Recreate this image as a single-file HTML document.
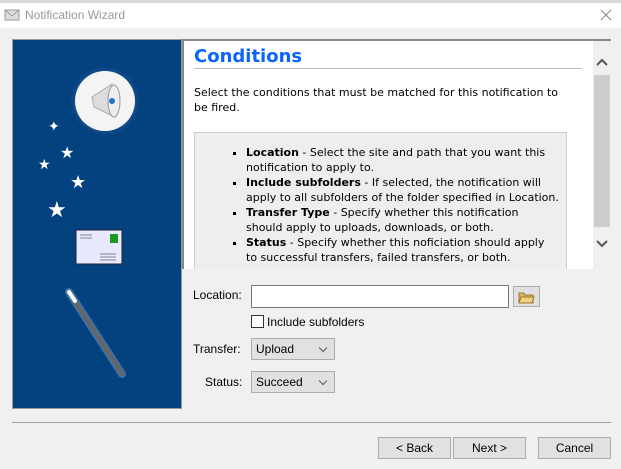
<!DOCTYPE html>
<html><head><style>
*{box-sizing:border-box;margin:0;padding:0}
body{width:621px;height:469px;background:#f0f0f0;position:relative;overflow:hidden;font-family:"Liberation Sans",sans-serif;font-size:12px;color:#000}
.a{position:absolute}
.pane{font-family:"DejaVu Sans",sans-serif;font-size:11px;line-height:15px;white-space:nowrap}
.btn{position:absolute;height:22px;background:#e1e1e1;border:1px solid #adadad;text-align:center;line-height:20px;font-size:12px}
.combo{position:absolute;width:84px;height:22px;background:#e1e1e1;border:1px solid #adadad;padding-left:4px;line-height:20px}
.combo:after{content:"";position:absolute;right:8px;top:6px;width:5px;height:5px;border-right:1px solid #555;border-bottom:1px solid #555;transform:rotate(45deg)}
</style></head><body>
<div class="a" style="left:0;top:0;width:621px;height:3px;background:#d8d8d8"></div>
<div class="a" style="left:0;top:3px;width:621px;height:25px;background:#fff"></div>
<svg class="a" style="left:4px;top:8px" width="16" height="14"><rect x="1" y="2" width="14" height="10" fill="#ddd" stroke="#999"/><path d="M1 2 L8 8 L15 2" stroke="#999" fill="none"/></svg>
<div class="a" style="left:25px;top:8px;color:#999;font-size:12px">Notification Wizard</div>
<svg class="a" style="left:600px;top:9px" width="12" height="12"><path d="M1 1L11 11M11 1L1 11" stroke="#888" stroke-width="1"/></svg>

<div class="a" style="left:12px;top:39px;width:170px;height:370px;background:#03417f;border:1px solid #999"></div>
<svg class="a" style="left:12px;top:39px" width="170" height="370">
<defs><radialGradient id="g"><stop offset="0" stop-color="#fff"/><stop offset="1" stop-color="#fff" stop-opacity="0"/></radialGradient></defs>
<circle cx="93" cy="62" r="35" fill="url(#g)" opacity=".5"/>
<circle cx="93" cy="62" r="30" fill="#f4f4f4"/>
<path d="M80 58 L100 45 L103 78 L82 68Z" fill="#ddd" stroke="#aaa"/><ellipse cx="102" cy="62" rx="6" ry="16" fill="#eee" stroke="#999"/><circle cx="100" cy="62" r="3" fill="#2a6fd0"/>
<g fill="#fff"><text x="36" y="92" font-size="14">✦</text><text x="48" y="119" font-size="16">★</text><text x="26" y="130" font-size="14">★</text><text x="58" y="149" font-size="18">★</text><text x="35" y="178" font-size="22">★</text></g>
<rect x="64" y="191" width="46" height="34" fill="#e8e8ff" stroke="#223"/><rect x="98" y="195" width="8" height="9" fill="#1a9a1a"/>
<g stroke="#888"><line x1="68" y1="196" x2="80" y2="196"/><line x1="68" y1="199" x2="80" y2="199"/><line x1="88" y1="215" x2="104" y2="215"/><line x1="88" y1="218" x2="104" y2="218"/><line x1="88" y1="221" x2="104" y2="221"/></g>
<line x1="57" y1="253" x2="110" y2="335" stroke="#fff" stroke-width="8" opacity=".25" stroke-linecap="round"/>
<line x1="57" y1="253" x2="110" y2="335" stroke="#666" stroke-width="4" stroke-linecap="round"/>
<line x1="57" y1="253" x2="63" y2="262" stroke="#fff" stroke-width="4" stroke-linecap="round"/>
</svg>

<div class="a" style="left:182px;top:39px;width:429px;height:230px;background:#fff;border-top:2px solid #888;border-left:2px solid #888"></div>
<div class="a" style="left:593px;top:41px;width:18px;height:228px;background:#f0f0f0"></div>
<div class="a" style="left:594px;top:75px;width:16px;height:152px;background:#cdcdcd"></div>
<svg class="a" style="left:596px;top:58px" width="12" height="8"><path d="M1 7L6 2L11 7" stroke="#555" stroke-width="2" fill="none"/></svg>
<svg class="a" style="left:596px;top:240px" width="12" height="8"><path d="M1 1L6 6L11 1" stroke="#555" stroke-width="2" fill="none"/></svg>
<div class="a" style="left:194px;top:46px;color:#0a64ff;font-family:'DejaVu Sans',sans-serif;font-weight:bold;font-size:18px">Conditions</div>
<div class="a" style="left:194px;top:68px;width:388px;height:1px;background:#bbb"></div>
<div class="a pane" style="left:194px;top:85px">Select the conditions that must be matched for this notification to<br>be fired.</div>
<div class="a pane" style="left:194px;top:132px;width:373px;height:137px;background:#eee;border:1px solid #ccc;border-bottom:none;padding:12px 0 0 51px;overflow:hidden">
<ul style="list-style:square;padding:0">
<li><b>Location</b> - Select the site and path that you want this<br>notification to apply to.</li>
<li><b>Include subfolders</b> - If selected, the notification will<br>apply to all subfolders of the folder specified in Location.</li>
<li><b>Transfer Type</b> - Specify whether this notification<br>should apply to uploads, downloads, or both.</li>
<li><b>Status</b> - Specify whether this noficiation should apply<br>to successful transfers, failed transfers, or both.</li></ul></div>

<div class="a" style="left:193px;top:288px">Location:</div>
<div class="a" style="left:251px;top:285px;width:258px;height:23px;background:#fff;border:1px solid #7a7a7a"></div>
<div class="a" style="left:513px;top:286px;width:27px;height:21px;background:#e1e1e1;border:1px solid #adadad"></div>
<svg class="a" style="left:518px;top:290px" width="17" height="14"><path d="M1 3h5l1 2h8v8H1z" fill="#d9b45a" stroke="#9a7a30"/><path d="M3 7h13l-2 6H1z" fill="#f0d080" stroke="#9a7a30"/></svg>
<div class="a" style="left:251px;top:315px;width:13px;height:13px;background:#fff;border:1px solid #333"></div>
<div class="a" style="left:267px;top:315px">Include subfolders</div>
<div class="a" style="left:193px;top:342px">Transfer:</div>
<div class="combo" style="left:251px;top:338px">Upload</div>
<div class="a" style="left:205px;top:375px">Status:</div>
<div class="combo" style="left:251px;top:371px">Succeed</div>
<div class="a" style="left:12px;top:422px;width:599px;height:1px;background:#a0a0a0"></div>
<div class="btn" style="left:378px;top:437px;width:73px">&lt; Back</div>
<div class="btn" style="left:453px;top:437px;width:73px">Next &gt;</div>
<div class="btn" style="left:538px;top:437px;width:73px">Cancel</div>
</body></html>
